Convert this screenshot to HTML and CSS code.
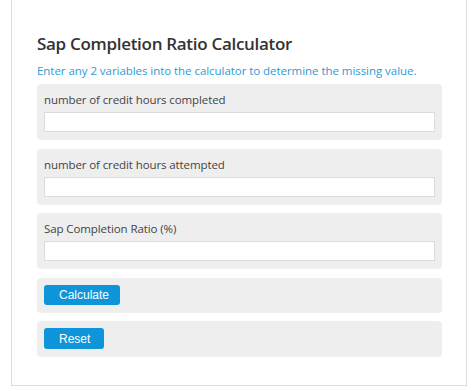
FILE: index.html
```html
<!DOCTYPE html>
<html lang="en">
<head>
    <meta charset="UTF-8">
    <meta name="viewport" content="width=device-width, initial-scale=1.0">
    <title>Sap Completion Ratio Calculator</title>
    <link rel="stylesheet" href="styles.css">
</head>
<body>
    <div class="calculator">
        <h1>Sap Completion Ratio Calculator</h1>
        <p class="intro">Enter any 2 variables into the calculator to determine the missing value.</p>
        <form id="sap-form">
            <div class="field">
                <label for="completed">number of credit hours completed</label>
                <input type="text" id="completed" name="completed">
            </div>
            <div class="field">
                <label for="attempted">number of credit hours attempted</label>
                <input type="text" id="attempted" name="attempted">
            </div>
            <div class="field">
                <label for="ratio">Sap Completion Ratio (%)</label>
                <input type="text" id="ratio" name="ratio">
            </div>
            <div class="field action">
                <button type="button" id="calculate-button">Calculate</button>
            </div>
            <div class="field action">
                <button type="reset" id="reset-button">Reset</button>
            </div>
        </form>
    </div>
</body>
</html>
```

FILE: styles.css
```css
body {
    margin: 0;
    background: #fff;
    font-family: "Open Sans", sans-serif;
}

.calculator {
    margin-left: 11px;
    width: 405px;
    height: 385px;
    padding: 0 24px 0 25px;
    border: 1px solid #dddddd;
    border-top: none;
}

h1 {
    margin: 0;
    padding-top: 33px;
    font-size: 17px;
    font-weight: 600;
    line-height: 22px;
    letter-spacing: -0.3px;
    color: #333;
}

.intro {
    margin: 8px 0 6px;
    font-size: 11.5px;
    line-height: 15px;
    letter-spacing: -0.05px;
    color: #2d9ad6;
}

.field {
    background: #eeeeee;
    border-radius: 4px;
    padding: 7px 7px 8px 7px;
    margin-bottom: 8.6px;
}

.field label {
    display: block;
    font-size: 11.5px;
    line-height: 17px;
    letter-spacing: -0.1px;
    color: #444;
    margin-bottom: 4px;
}

.field input {
    display: block;
    box-sizing: border-box;
    width: 100%;
    height: 20px;
    border: 1px solid #dcdcdc;
    background: #fff;
    padding: 0 4px;
}

.field.action {
    padding: 7px 7px 8px;
}

.field.action + .field.action {
    margin-bottom: 0;
}

.field button {
    display: block;
    height: 20px;
    padding: 0 15px;
    border: none;
    border-radius: 3px;
    background: #0e95d9;
    color: #fff;
    font-family: "Liberation Sans", Arial, sans-serif;
    font-size: 12px;
}

#calculate-button {
    width: 76px;
}

#reset-button {
    width: 60px;
    height: 21px;
}
```
